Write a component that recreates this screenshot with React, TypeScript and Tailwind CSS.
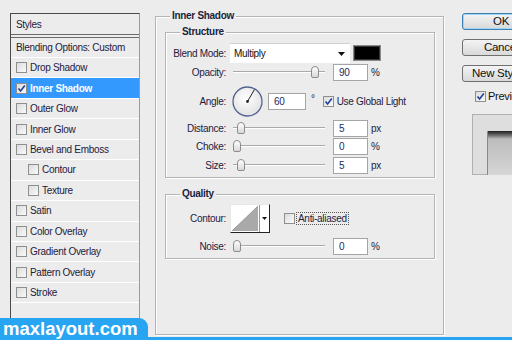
import React from 'react';

const styleItems = [
  { label: 'Drop Shadow' },
  { label: 'Inner Shadow', checked: true, selected: true },
  { label: 'Outer Glow' },
  { label: 'Inner Glow' },
  { label: 'Bevel and Emboss' },
  { label: 'Contour', indent: true },
  { label: 'Texture', indent: true },
  { label: 'Satin' },
  { label: 'Color Overlay' },
  { label: 'Gradient Overlay' },
  { label: 'Pattern Overlay' },
  { label: 'Stroke' },
];

// small windows-ish checkbox
const Check = ({ checked = false }: { checked?: boolean }) => (
  <div className="w-[11px] h-[11px] shrink-0 border border-[#8e8f8f] bg-gradient-to-br from-[#dcdcdc] to-[#fafafa] flex items-center justify-center">
    {checked && (
      <svg width="9" height="9" viewBox="0 0 9 9">
        <path d="M1.5 4.5 L3.6 7 L7.8 1.5" fill="none" stroke="#21409a" strokeWidth="1.6" />
      </svg>
    )}
  </div>
);

const Slider = ({ pos }: { pos: number }) => (
  <div className="relative w-[92px] h-[14px] ml-[7px]">
    <div className="absolute left-0 right-0 top-[6px] h-[2px] border-t border-[#a9a9a9] border-b border-b-white" />
    <div
      className="absolute top-[1px] w-[8px] h-[12px] rounded-t-[4px] rounded-b-[2px] border border-[#8c8c8c] bg-gradient-to-b from-white to-[#d8d8d8]"
      style={{ left: pos }}
    />
  </div>
);

const NumBox = ({ value, w = 35 }: { value: string; w?: number }) => (
  <div
    className="h-[17px] border border-[#a5a5a5] bg-white pl-[5px] flex items-center text-[#1c2a66]"
    style={{ width: w }}
  >
    {value}
  </div>
);

const Label = ({ children }: { children: React.ReactNode }) => (
  <div className="w-[60px] text-right shrink-0">{children}</div>
);

const SliderRow = ({ label, pos, value, unit, className = '' }: { label: string; pos: number; value: string; unit: string; className?: string }) => (
  <div className={`flex items-center h-[18px] ${className}`}>
    <Label>{label}</Label>
    <Slider pos={pos} />
    <div className="ml-[8px]">
      <NumBox value={value} />
    </div>
    <span className="ml-[3px]">{unit}</span>
  </div>
);

const GroupBox = ({ title, className = '', children }: { title: string; className?: string; children?: React.ReactNode }) => (
  <div className={`relative border border-[#b4b4b4] shadow-[inset_1px_1px_0_#fff,1px_1px_0_#fff] ${className}`}>
    <span className="absolute top-[-7px] left-[14px] px-[2px] bg-[#ececec] font-bold leading-[12px] text-[#1a1f3d]">{title}</span>
    {children}
  </div>
);

const Button = ({ label, primary = false, className = '' }: { label: string; primary?: boolean; className?: string }) => (
  <div
    className={`w-[78px] h-[17px] rounded-[3px] border ${primary ? 'border-[#3c7fb1] shadow-[inset_0_0_0_1px_#9fd5f5]' : 'border-[#707070]'} bg-gradient-to-b from-[#f4f4f4] to-[#d9d9d9] flex items-center justify-center text-[11.5px] text-[#111] ${className}`}
  >
    {label}
  </div>
);

export default function App() {
  return (
    <div className="relative w-[512px] h-[340px] overflow-hidden bg-[#ececec] font-['Liberation_Sans',Arial,sans-serif] text-[10px] tracking-[-0.3px] text-[#1c2140] flex">
      {/* styles list */}
      <div className="ml-[10px] mt-[13px] w-[130px] h-[330px] shrink-0 border-l border-t border-[#4a4a4a] border-r border-r-[#9a9a9a] bg-[#ececec]">
        <div className="h-[20px] pl-[5px] flex items-center">Styles</div>
        <div className="h-[4px] border-y border-[#6a6a6a]" />
        <div className="h-[20px] pl-[5px] flex items-center border-b border-white">Blending Options: Custom</div>
        {styleItems.map((s) => (
          <div
            key={s.label}
            className={`h-[20.45px] flex items-center gap-[3px] border-b border-white ${s.indent ? 'pl-[17px]' : 'pl-[5px]'} ${s.selected ? 'bg-[#3399ff] text-white font-bold' : ''}`}
          >
            <Check checked={s.checked} />
            <span>{s.label}</span>
          </div>
        ))}
      </div>

      {/* main settings */}
      <GroupBox title="Inner Shadow" className="ml-[15px] mt-[16px] w-[289px] h-[319px] shrink-0 pl-[9px] pt-[15px]">
        <GroupBox title="Structure" className="w-[270px] h-[146px] pt-[10px]">
          <div className="flex items-center h-[20px]">
            <Label>Blend Mode:</Label>
            <div className="ml-[4px] w-[120px] h-[20px] bg-white border-t border-[#d0d0d0] flex items-center pl-[4px] justify-between pr-[5px]">
              <span className="text-[#111]">Multiply</span>
              <svg width="7" height="4" viewBox="0 0 7 4">
                <path d="M0 0 H7 L3.5 4 Z" fill="#111" />
              </svg>
            </div>
            <div className="ml-[3px] w-[28px] h-[16px] border border-[#8a8a8a] bg-black shadow-[inset_0_0_0_1px_#333]" />
          </div>
          <SliderRow label="Opacity:" pos={78} value="90" unit="%" />
          <div className="flex items-center h-[34px] mt-[3px]">
            <Label>Angle:</Label>
            <svg width="31" height="31" viewBox="0 0 31 31" className="ml-[6px]">
              <defs>
                <radialGradient id="dial" cx="45%" cy="40%" r="60%">
                  <stop offset="0%" stopColor="#ffffff" />
                  <stop offset="100%" stopColor="#e2e2e2" />
                </radialGradient>
              </defs>
              <circle cx="15.5" cy="15.5" r="14.5" fill="url(#dial)" stroke="#52628f" strokeWidth="1.3" />
              <line x1="15.5" y1="15.5" x2="22.5" y2="3.4" stroke="#222" strokeWidth="1" />
              <circle cx="15.5" cy="15.5" r="1.4" fill="#222" />
            </svg>
            <div className="ml-[5px]">
              <NumBox value="60" w={38} />
            </div>
            <span className="ml-[5px] self-start mt-[7px]">°</span>
            <div className="ml-[8px] flex items-center gap-[3px]">
              <Check checked />
              <span>Use Global Light</span>
            </div>
          </div>
          <SliderRow label="Distance:" pos={4} value="5" unit="px" className="mt-[1px]" />
          <SliderRow label="Choke:" pos={0} value="0" unit="%" />
          <SliderRow label="Size:" pos={4} value="5" unit="px" className="mt-[1px]" />
        </GroupBox>

        <GroupBox title="Quality" className="w-[270px] h-[65px] mt-[16px] pt-[9px]">
          <div className="flex items-center h-[29px]">
            <Label>Contour:</Label>
            <div className="ml-[4px] flex h-[29px] border border-[#e8e8e8] border-r-[#222] border-b-[#222] bg-white">
              <svg width="28" height="27" viewBox="0 0 28 27" className="block">
                <rect x="0" y="0" width="28" height="27" fill="#fff" />
                <path d="M1 26 L27 1 L27 26 Z" fill="#a9a9a9" />
                <path d="M1 26 L27 1" stroke="#8a8a8a" strokeWidth="0.8" />
              </svg>
              <div className="w-[10px] border-l border-[#999] flex items-center justify-center">
                <svg width="5" height="3" viewBox="0 0 5 3">
                  <path d="M0 0 H5 L2.5 3 Z" fill="#111" />
                </svg>
              </div>
            </div>
            <div className="ml-[14px] flex items-center gap-[1px]">
              <Check />
              <span className="px-[1px] border border-dotted border-[#555] leading-[11px]">Anti-aliased</span>
            </div>
          </div>
          <SliderRow label="Noise:" pos={0} value="0" unit="%" className="mt-[4px]" />
        </GroupBox>
      </GroupBox>

      {/* buttons + preview */}
      <div className="ml-[18px] mt-[13px] flex flex-col shrink-0">
        <Button label="OK" primary />
        <Button label="Cancel" className="mt-[9px]" />
        <Button label="New Style..." className="mt-[9px]" />
        <div className="ml-[13px] mt-[6px] flex items-center gap-[2px] text-[11px] text-[#111]">
          <Check checked />
          <span>Preview</span>
        </div>
        <div className="ml-[10px] mt-[9px] w-[70px] h-[61px] border border-[#b0b0b0] bg-[#dedede] pl-[14px] pt-[16px]">
          <div className="w-[50px] h-[44px] bg-gradient-to-b from-[#202020] via-[#bcbcbc] via-[18%] to-[#d6d6d6] shadow-[inset_1px_0_0_#888]" />
        </div>
      </div>

      {/* watermark */}
      <div className="absolute left-0 right-0 bottom-0 h-[3px] bg-[#27a4f2]" />
      <div className="absolute left-0 bottom-0 w-[148px] h-[22px] bg-[#27a4f2] rounded-tr-[9px] flex items-center pl-[3px]">
        <span className="text-white font-bold text-[18.5px] tracking-normal leading-none font-['Liberation_Sans',Arial,sans-serif]">maxlayout.com</span>
      </div>
    </div>
  );
}
